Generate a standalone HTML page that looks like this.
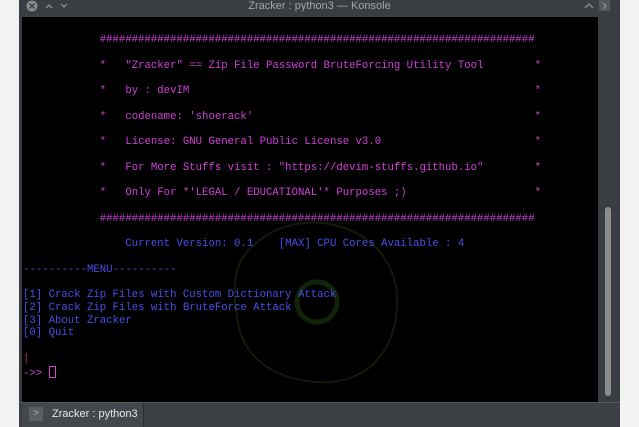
<!DOCTYPE html>
<html><head><meta charset="utf-8"><style>
html,body{margin:0;padding:0;width:639px;height:426px;overflow:hidden;background:#f2f2f2;}
#win{position:absolute;left:19px;top:0;width:601px;height:426px;background:#3a3d41;}
#title{position:absolute;left:0;top:0;width:601px;height:17px;color:#a4a6a8;font:11px "Liberation Sans",sans-serif;text-align:center;line-height:12px;}
#term{position:absolute;left:3px;top:17px;width:576px;height:385px;background:#000;overflow:hidden;}
pre{position:absolute;left:1px;top:17px;margin:0;font:10.67px/12.75px "Liberation Mono",monospace;color:#d040d8;white-space:pre;}
.b{color:#4a4ee8}
.h{color:#c840d8}
#sb{position:absolute;left:586px;top:207px;width:6px;height:189px;background:#8c8e90;border-radius:3px;}
#tabs{position:absolute;left:0;top:402px;width:601px;height:24px;background:#3c3f43;border-top:1px solid #55585c;}
#tab{position:absolute;left:3px;top:0;width:121px;height:24px;background:#44474b;border-right:1px solid #2d2f32;}
#tab .ic{position:absolute;left:7px;top:4px;width:14px;height:14px;background:#5b5e62;color:#aaa;font:10px "Liberation Sans";text-align:center;line-height:14px;}
#tab .t{position:absolute;left:30px;top:5px;color:#e8e8e8;font:11px "Liberation Sans",sans-serif;}
</style></head><body>
<div id="win">
<div id="title">
<svg style="position:absolute;left:7px;top:0" width="60" height="14"><circle cx="6" cy="6" r="5.5" fill="#8a8c8e"/><path d="M3.5 3.5l5 5M8.5 3.5l-5 5" stroke="#3a3d41" stroke-width="1.4"/><path d="M20 8l3-3 3 3" stroke="#8a8c8e" fill="none" stroke-width="1.3"/><path d="M35 4l3 3 3-3" stroke="#8a8c8e" fill="none" stroke-width="1.3"/></svg>
<span style="position:absolute;left:0;right:0;top:0">Zracker : python3 — Konsole</span>
<svg style="position:absolute;left:563px;top:0" width="36" height="13"><path d="M3 8l4-4 4 4" stroke="#888" fill="none" stroke-width="1.5"/><rect x="17" y="0" width="11" height="11" fill="#55585c"/><path d="M21 3l3 3-3 3" stroke="#999" fill="none"/></svg>
</div>
<div id="term">
<svg style="position:absolute;left:190px;top:190px" width="200" height="190"><path d="M40 40 C90 -10 190 20 185 100 C182 150 150 178 105 175 C60 172 30 150 25 110 C20 80 22 55 40 40Z" fill="none" stroke="#101c08" stroke-width="2"/><circle cx="105" cy="95" r="20" fill="none" stroke="#122408" stroke-width="5"/></svg>
<pre><span class="h">            ####################################################################</span>

            *   "Zracker" == Zip File Password BruteForcing Utility Tool        *

            *   by : devIM                                                      *

            *   codename: 'shoerack'                                            *

            *   License: GNU General Public License v3.0                        *

            *   For More Stuffs visit : "https://devim-stuffs.github.io"        *

            *   Only For *'LEGAL / EDUCATIONAL'* Purposes ;)                    *

<span class="h">            ####################################################################</span>

<span class="b">                Current Version: 0.1    [MAX] CPU Cores Available : 4</span>

<span class="b">----------MENU----------</span>

<span class="b">[1] Crack Zip Files with Custom Dictionary Attack
[2] Crack Zip Files with BruteForce Attack
[3] About Zracker
[0] Quit</span>

<span style="color:#c03070">|</span>
-&gt;&gt; <span style="display:inline-block;width:5px;height:10px;border:1px solid #d040d0;vertical-align:-2px"></span></pre>
</div>
<div id="sb"></div>
<div id="tabs"><div id="tab"><div class="ic">&gt;</div><div class="t">Zracker : python3</div></div></div>
</div>
</body></html>
